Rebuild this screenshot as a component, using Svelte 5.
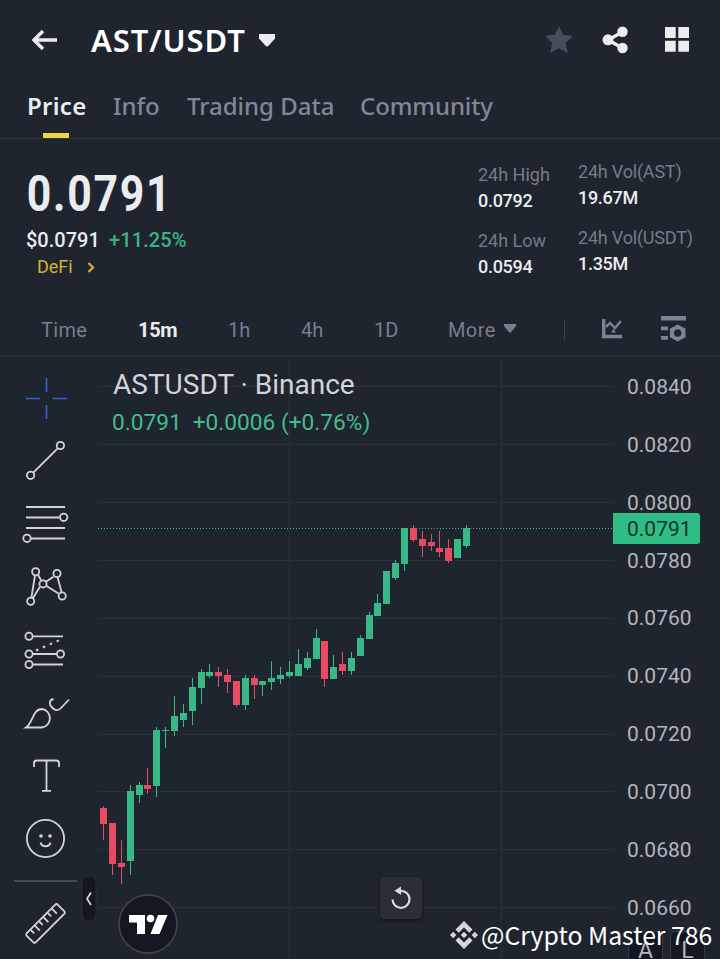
<script>
  const tabs = [
    { label: 'Price', cls: 'price' },
    { label: 'Info', cls: 'info' },
    { label: 'Trading Data', cls: 'trading' },
    { label: 'Community', cls: 'community' }
  ];
  const statColumns = [
    [['24h High', '0.0792'], ['24h Low', '0.0594']],
    [['24h Vol(AST)', '19.67M'], ['24h Vol(USDT)', '1.35M']]
  ];
  const levels = ['0.0840', '0.0820', '0.0800', '0.0780', '0.0760', '0.0740', '0.0720', '0.0700', '0.0680', '0.0660'];
  const levelY = (i) => 29.4 + i * 57.85;

  // [x, up, high, low, body top, body bottom] in page pixels; the plot starts at (98, 357)
  const candles = [
    [100, 0, 806, 840, 808, 824], [109, 0, 823, 875, 823, 864], [118, 0, 840, 884, 863, 867],
    [127, 1, 785, 875, 791, 861], [136, 1, 782, 803, 785, 795], [144, 0, 768, 794, 785, 789],
    [153, 1, 727, 797, 730, 786], [162, 1, 727, 748, 730, 731], [171, 1, 696, 736, 716, 731],
    [180, 1, 704, 727, 713, 720], [189, 1, 678, 725, 687, 711], [198, 1, 669, 704, 672, 688],
    [206, 1, 664, 678, 672, 676], [215, 0, 667, 687, 672, 676], [224, 0, 669, 693, 675, 682],
    [233, 0, 681, 707, 681, 705], [242, 1, 675, 710, 678, 705], [251, 0, 675, 699, 678, 685],
    [259, 1, 681, 696, 681, 685], [268, 1, 661, 690, 678, 682], [277, 1, 667, 684, 675, 679],
    [286, 1, 661, 678, 672, 676], [295, 1, 649, 676, 664, 676], [304, 1, 652, 670, 658, 668],
    [313, 1, 629, 659, 638, 659], [321, 0, 641, 687, 641, 679], [330, 1, 655, 679, 667, 679],
    [339, 0, 652, 675, 664, 671], [348, 1, 652, 675, 658, 671], [357, 1, 635, 656, 638, 656],
    [366, 1, 612, 639, 615, 639], [374, 1, 594, 616, 603, 616], [383, 1, 571, 604, 571, 604],
    [392, 1, 560, 580, 563, 578], [401, 1, 528, 571, 528, 564], [410, 0, 525, 542, 528, 540],
    [419, 0, 531, 557, 539, 546], [428, 0, 534, 551, 542, 546], [436, 0, 531, 557, 548, 552],
    [445, 0, 539, 563, 548, 561], [454, 1, 539, 558, 539, 558], [463, 1, 525, 548, 528, 546]
  ].map(([x, up, high, low, top, bottom]) => ({ x: x - 98, up, high: high - 357, low: low - 357, top: top - 357, bottom: bottom - 357 }));
</script>

<div class="app">
  <header>
    <svg class="back" width="28" height="24" viewBox="0 0 28 24"><path d="M27 12H4M13 3 4 12l9 9" /></svg>
    <h1>AST/USDT</h1>
    <svg class="caret" width="16" height="13" viewBox="0 0 16 13"><path d="M0 0h16v4.500L9.500 11.800Q8 13.300 6.500 11.800L0 4.500Z" /></svg>
    <div class="actions">
      <svg width="28" height="28" viewBox="0 0 28 28"><path fill="#454e5c" stroke="#454e5c" stroke-width="1.500" stroke-linejoin="round" d="m14 1.700 3.600 7.900 8.700 1-6.300 5.900 1.800 9.400-7.800-4.600-7.800 4.600L8 16.500l-6.300-5.900 8.700-1Z" /></svg>
      <svg width="28" height="28" viewBox="0 0 28 28"><path d="M21.500 6 7 14l14.500 8" fill="none" stroke="#eaecef" stroke-width="3.400" /><g fill="#eaecef"><circle cx="21.500" cy="5.700" r="5.200" /><circle cx="7" cy="13.800" r="5.500" /><circle cx="21.500" cy="22" r="5.200" /></g></svg>
      <svg width="24" height="25" viewBox="0 0 24 25" fill="#eaecef"><path d="M0 0h10.700v11H0zM13.300 0H24v11H13.300zM0 13.800h10.700v11H0zM13.300 13.800H24v11H13.300z" /></svg>
    </div>
  </header>

  <nav class="tabs">
    {#each tabs as tab, i}
      <span class="tab {tab.cls}" class:active={i === 0}>{tab.label}</span>
    {/each}
  </nav>

  <section class="summary">
    <div class="quote">
      <div class="last">0.0791</div>
      <div class="sub"><span class="usd">$0.0791</span><span class="change">+11.25%</span></div>
      <div class="tag"><span>DeFi</span><svg width="8" height="11" viewBox="0 0 8 11"><path d="m1.500 1 4.500 4.500L1.500 10" /></svg></div>
    </div>
    {#each statColumns as column, i}
      <dl class="col{i}">
        {#each column as [label, value]}
          <dt>{label}</dt>
          <dd>{value}</dd>
        {/each}
      </dl>
    {/each}
  </section>

  <nav class="intervals">
    <span class="time">Time</span>
    <span class="m15">15m</span>
    <span class="h1">1h</span>
    <span class="h4">4h</span>
    <span class="d1">1D</span>
    <span class="more">More</span>
    <svg class="drop" width="12" height="9" viewBox="0 0 12 9"><path d="M0 0h12v2L7 8.300Q6 9 5 8.300L0 2Z" /></svg>
    <i></i>
    <svg class="indicator" width="20" height="20" viewBox="0 0 20 20"><path d="M1.700 0v17.500H20" fill="none" stroke="#7c8494" stroke-width="3.400" /><path d="m4 8 4-4 5 5 6-7" fill="none" stroke="#7c8494" stroke-width="2.400" /><path d="M11.500 9.500 9 13.500h5z" fill="#7c8494" /></svg>
    <svg class="settings" width="25" height="26" viewBox="0 0 25 26" fill="#7c8494"><path d="M0 0h25v4.600H0zM0 10.500h7v3.800H0zM0 20h7v3.800H0z" /><path fill-rule="evenodd" d="m16.700 8.500 7.800 4.300v8.400l-7.800 4.300-7.800-4.300v-8.400zM16.700 13.200a3.800 3.800 0 1 0 .01 0z" /></svg>
  </nav>

  <main>
    <aside>
      <svg width="98" height="602" viewBox="0 357 98 602" fill="none" stroke="#d1d4dc" stroke-width="1.800">
        <path stroke="#3561d8" stroke-width="1.600" d="M46.500 378v14M46.500 405v14M26 398.500h14M52.500 398.500H67" />
        <path d="M33.300 472.700 57.700 448.300" />
        <circle cx="30.600" cy="475.300" r="3.700" /><circle cx="60.400" cy="445.500" r="3.700" />
        <path d="M26 507h39M26 517.500h33.500M26 528h39M31 538.500h34" />
        <circle cx="63.700" cy="517.300" r="3.700" /><circle cx="27" cy="538.300" r="3.700" />
        <path d="M35 575.500 31.500 597M38 575l3 5M39.800 587 33 598M46 581.800l7.500-5M57.500 577l4 15M46.500 586l12 7.500" />
        <circle cx="35.700" cy="571.700" r="3.600" /><circle cx="43" cy="583.900" r="3.600" /><circle cx="57" cy="573.500" r="3.600" /><circle cx="30.700" cy="601.300" r="3.600" /><circle cx="62.200" cy="596" r="3.600" />
        <path d="M32.500 636.300h30.500M32.500 654h24M32.500 664.500h30.500" />
        <circle cx="29" cy="636.300" r="3.600" /><circle cx="29" cy="654" r="3.600" /><circle cx="29" cy="664.500" r="3.600" /><circle cx="60.500" cy="654" r="3.600" />
        <path stroke-width="2" stroke-dasharray="2.500 5" d="m36 650.500 26-11.500" />
        <path d="M26 727.500c7-4.500 6.500-18.500 16-18.500a8.800 9.300 0 0 1 0 18.500zM53.500 699c-5 1-4.500 6-1 9 3 3 6 3 9-.5l7.500-8" />
        <path d="M34 767v-4q0-2.500 3-2.500h19q3 0 3 2.500v4M46.500 760.500v30M42 790.800h9" />
        <circle cx="45.500" cy="838.500" r="18.600" /><path d="M40.500 842.500c1 5 9 5 10 0" />
        <g fill="#d1d4dc" stroke="none"><circle cx="41" cy="836" r="1.800" /><circle cx="50" cy="836" r="1.800" /></g>
        <path stroke="#454a55" stroke-width="2" d="M14 881h63" />
        <g transform="translate(45.500 923.500) rotate(-45)"><rect x="-22" y="-6.500" width="44" height="13" rx="2" /><path d="M-15-6v5M-9-6v7M-3-6v5M3-6v7M9-6v5M15-6v7" /></g>
        <path d="M82 883q0-7 7-7t7 7v31q0 7-7 7t-7-7z" fill="#131722" stroke="#2a2e39" stroke-width="1" /><path d="m91 892.500-4 6.200 4 6.200" />
      </svg>
    </aside>

    <div class="plot">
      <svg width="515" height="602" viewBox="0 0 515 602" shape-rendering="crispEdges">
        <g fill="#29303a">
          {#each levels as level, i}<rect x="0" y={Math.round(levelY(i))} width="515" height="1" />{/each}
          <rect x="191" y="0" width="1" height="602" /><rect x="403" y="0" width="1" height="602" />
        </g>
        <path d="M0 171.500h515" stroke="#3eb889" stroke-dasharray="1 2" />
        {#each candles as c}
          <g fill={c.up ? '#38b887' : '#e84a61'}>
            <rect x={c.x + 3} y={c.high} width="1" height={c.low - c.high} />
            <rect x={c.x} y={c.top} width="7" height={c.bottom - c.top} />
          </g>
        {/each}
      </svg>
      <div class="legend">
        <div class="symbol">ASTUSDT · Binance</div>
        <div class="delta"><span>0.0791</span><span>+0.0006 (+0.76%)</span></div>
      </div>
      <svg class="tv" width="60" height="60" viewBox="0 0 60 60"><circle cx="30" cy="30" r="29" fill="#131722" stroke="#434651" stroke-width="1.600" /><g fill="#fff"><path d="M11 21h16v19h-8V28.500h-8zM40 21h9.500l-8 19h-9z" /><circle cx="32.500" cy="24.500" r="3.800" /></g></svg>
      <div class="reset"><svg width="22" height="24" viewBox="0 0 22 24"><path d="M2.500 13.500a8.500 8.500 0 1 0 8.500-8.700H9" fill="none" stroke="#d8dbe2" stroke-width="2.200" /><path d="M4.500 4.700 11 .5v8.500z" fill="#d8dbe2" /></svg></div>
    </div>

    <div class="axis">
      {#each levels as level}<span>{level}</span>{/each}
      <b>0.0791</b>
      <div class="modes"><em>A</em><em>L</em></div>
    </div>
  </main>

  <div class="watermark">
    <svg width="28" height="28" viewBox="0 0 28 28" fill="#d5d6d7"><path d="m14 0 8.500 8.500-3.200 3.200L14 6.400l-5.300 5.300-3.200-3.200zM14 28l8.500-8.500-3.200-3.200-5.300 5.300-5.300-5.300-3.200 3.200zM3.200 10.800 6.400 14l-3.200 3.200L0 14zM24.800 10.800 28 14l-3.200 3.200-3.200-3.200zM14 10.800l3.200 3.200-3.200 3.200-3.200-3.200z" /></svg>
    <span>@Crypto Master 786</span>
  </div>
</div>

<style>
  :global(body) { margin: 0; background: #1f252f; }
  .app { position: relative; width: 720px; height: 959px; overflow: hidden; background: #1f252f; font-family: Roboto, sans-serif; color: #eaecef; white-space: nowrap; }
  svg { display: block; flex: none; }
  header { height: 80px; display: flex; align-items: center; padding: 0 31px 1px 30px; box-sizing: border-box; }
  .back { fill: none; stroke: #eaecef; stroke-width: 3.4; }
  h1 { margin: 1px 0 0 33px; width: 168px; font: 600 31px/40px 'Noto Sans', sans-serif; color: #fff; letter-spacing: 0.9px; }
  .caret { fill: #eaecef; margin-top: 1px; }
  .actions { margin-left: auto; display: flex; align-items: center; }
  .actions svg + svg { margin-left: 28px; }
  .actions svg:last-child { margin-left: 36px; }
  .tabs { height: 59px; box-sizing: border-box; border-bottom: 1px solid #2d343f; display: flex; padding: 9px 0 0 27px; font: 500 24px/33px 'Noto Sans', sans-serif; color: #808796; }
  .tab { position: relative; }
  .price { width: 86px; }
  .info { width: 74px; }
  .trading { width: 173px; }
  .community { letter-spacing: -0.1px; }
  .active { color: #eaecef; font-weight: 600; letter-spacing: 0.3px; }
  .active::after { content: ''; position: absolute; left: 16px; top: 44px; width: 26px; height: 5px; background: #f3d147; }
  .summary { height: 165px; display: flex; }
  .quote { width: 452px; padding: 25px 0 0 26px; }
  .last { font-size: 50px; line-height: 58px; font-weight: 700; letter-spacing: 2px; transform: scaleX(0.855); transform-origin: 0 0; padding: 1px 0 0 1px; }
  .sub { display: flex; font-size: 20px; line-height: 28px; margin-top: 3px; font-weight: 500; }
  .usd { width: 83px; }
  .change { color: #3eb183; letter-spacing: 0.1px; }
  .tag { display: flex; align-items: center; color: #dcae2e; font-size: 18px; line-height: 26px; padding-left: 11px; }
  .tag span { width: 50px; }
  .tag svg { fill: none; stroke: #dcae2e; stroke-width: 2.2; }
  dl { margin: 0; }
  .col0 { width: 100px; padding-top: 23px; }
  .col1 { padding-top: 20px; letter-spacing: -0.2px; }
  dt { font-size: 18px; line-height: 26px; color: #747b88; }
  dd { margin: 0 0 14px; font-size: 18px; line-height: 26px; font-weight: 500; letter-spacing: -0.3px; }
  .intervals { height: 53px; box-sizing: border-box; border-bottom: 2px solid #272d37; display: flex; align-items: center; padding-left: 41px; font-size: 20px; color: #777f8d; }
  .time { width: 97px; letter-spacing: 0.3px; }
  .m15 { width: 90px; color: #eaecef; font-weight: 700; letter-spacing: -0.3px; }
  .h1 { width: 73px; }
  .h4 { width: 73px; }
  .d1 { width: 74px; }
  .more { width: 56px; letter-spacing: 0.4px; }
  .drop { fill: #777f8d; margin-top: -2px; }
  i { width: 1px; height: 21px; background: #3b424e; margin-left: 48px; }
  .indicator { margin: -2px 0 0 37px; }
  .settings { margin: -1px 0 0 39px; }
  main { height: 602px; display: flex; }
  .plot { position: relative; width: 515px; }
  .legend { position: absolute; left: 15px; top: 11px; }
  .symbol { font-size: 28px; line-height: 34px; color: #d1d4dc; }
  .delta { display: flex; gap: 11px; font-size: 22.7px; line-height: 30px; margin: 6px 0 0 -1px; color: #42bd8d; }
  .tv { position: absolute; left: 20px; top: 537px; }
  .reset { position: absolute; left: 282px; top: 520px; width: 42px; height: 42px; display: flex; align-items: center; justify-content: center; border-radius: 5px; background: #2a2e39; box-shadow: 0 2px 4px #0006; }
  .axis { position: relative; width: 107px; }
  .axis span { display: block; height: 57.85px; line-height: 60px; padding-left: 14px; font-size: 21px; color: #b2b5be; }
  .axis b { position: absolute; left: 0; top: 156px; width: 73px; height: 31px; padding-left: 14px; background: #2fbd85; border-radius: 0 3px 3px 0; font: 400 21px/32px Roboto, sans-serif; color: #113522; }
  .modes { position: absolute; left: 15px; top: 574px; display: flex; gap: 7px; }
  .modes em { width: 33px; height: 40px; border: 1px solid #363a45; background: #131722; border-radius: 4px; text-align: center; font: 400 23px/38px Roboto, sans-serif; color: #b2b5be; }
  .watermark { position: absolute; left: 450px; top: 918px; display: flex; align-items: center; }
  .watermark span { margin: -1px 0 0 3px; font: 400 24.8px/34px 'Noto Sans CJK SC', sans-serif; color: #fff; }
</style>
